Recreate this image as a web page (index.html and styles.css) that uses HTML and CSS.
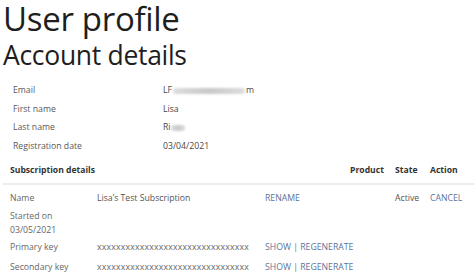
FILE: index.html
```html
<!DOCTYPE html>
<html>
<head>
<meta charset="utf-8">
<link rel="stylesheet" href="styles.css">
</head>
<body>
<h1 class="title">User profile</h1>
<h2 class="subtitle">Account details</h2>
<div class="account">
  <div class="label">Email</div><div class="value">LF<span class="blur wide"></span>m</div>
  <div class="label">First name</div><div class="value">Lisa</div>
  <div class="label">Last name</div><div class="value">Ri<span class="blur short"></span></div>
  <div class="label">Registration date</div><div class="value">03/04/2021</div>
</div>
<table class="subs">
  <colgroup>
    <col class="c1"><col class="c2"><col class="c3"><col class="c4"><col class="c5"><col class="c6">
  </colgroup>
  <thead>
    <tr>
      <th colspan="3">Subscription details</th>
      <th>Product</th>
      <th>State</th>
      <th>Action</th>
    </tr>
  </thead>
  <tbody>
    <tr class="r-name">
      <td class="lbl">Name</td>
      <td class="val">Lisa’s Test Subscription</td>
      <td><a class="link">RENAME</a></td>
      <td></td>
      <td class="val">Active</td>
      <td><a class="link">CANCEL</a></td>
    </tr>
    <tr class="r-start">
      <td class="lbl">Started on 03/05/2021</td>
      <td></td><td></td><td></td><td></td><td></td>
    </tr>
    <tr class="r-key">
      <td class="lbl">Primary key</td>
      <td class="val key">xxxxxxxxxxxxxxxxxxxxxxxxxxxxxxxx</td>
      <td colspan="4"><a class="link">SHOW</a><span class="sep"> | </span><a class="link">REGENERATE</a></td>
    </tr>
    <tr class="r-key">
      <td class="lbl">Secondary key</td>
      <td class="val key">xxxxxxxxxxxxxxxxxxxxxxxxxxxxxxxx</td>
      <td colspan="4"><a class="link">SHOW</a><span class="sep"> | </span><a class="link">REGENERATE</a></td>
    </tr>
  </tbody>
</table>
</body>
</html>
```
FILE: styles.css
```css
html, body {
  margin: 0;
  padding: 0;
  background: #ffffff;
}
body {
  font-family: "Open Sans", "Noto Sans", sans-serif;
  color: #222;
  width: 474px;
  overflow: hidden;
}
.title {
  font-weight: 400;
  font-size: 33px;
  line-height: 38px;
  margin: 0 0 0 3px;
  color: #1e1e1e;
  letter-spacing: -0.3px;
}
.subtitle {
  font-weight: 400;
  font-size: 26.5px;
  line-height: 34px;
  margin: 0 0 0 3px;
  color: #1e1e1e;
  letter-spacing: -0.3px;
}
.account {
  display: grid;
  grid-template-columns: 150px 1fr;
  padding: 9px 0 0 13px;
  font-size: 8.7px;
}
.account .label, .account .value {
  line-height: 18.5px;
  color: #585858;
}
.account .value {
  color: #474747;
}
.blur {
  display: inline-block;
  height: 6px;
  vertical-align: middle;
  background: linear-gradient(90deg, #ddd, #c8c8c8 50%, #ddd);
  border-radius: 3px;
  filter: blur(1.2px);
}
.blur.wide { width: 72px; margin: 0 1px; }
.blur.short { width: 14px; }
.subs {
  border-collapse: collapse;
  width: 471px;
  margin: 2px 0 0 3px;
  font-size: 8.7px;
  table-layout: fixed;
}
.c1 { width: 87px; }
.c2 { width: 168px; }
.c3 { width: 85px; }
.c4 { width: 45px; }
.c5 { width: 35px; }
.c6 { width: 51px; }
.subs th {
  text-align: left;
  font-weight: 700;
  font-size: 8.6px;
  color: #333;
  height: 26px;
  padding: 0 0 0 7px;
  border-bottom: 2px solid #ececec;
  white-space: nowrap;
}
.subs td {
  padding: 3px 0 3px 7px;
  vertical-align: top;
  color: #555;
  line-height: 14px;
  white-space: nowrap;
}
.subs tr.r-name td { padding-top: 6px; padding-bottom: 1px; }
.subs tr.r-start td { padding-top: 3px; padding-bottom: 0; white-space: normal; }
.subs td.lbl { color: #666; }
.subs td.val { color: #555; }
.subs td.key { color: #666; letter-spacing: 0.2px; overflow: hidden; }
.link {
  color: #5d7399;
  text-decoration: none;
}
.sep { color: #5d7399; }
```
